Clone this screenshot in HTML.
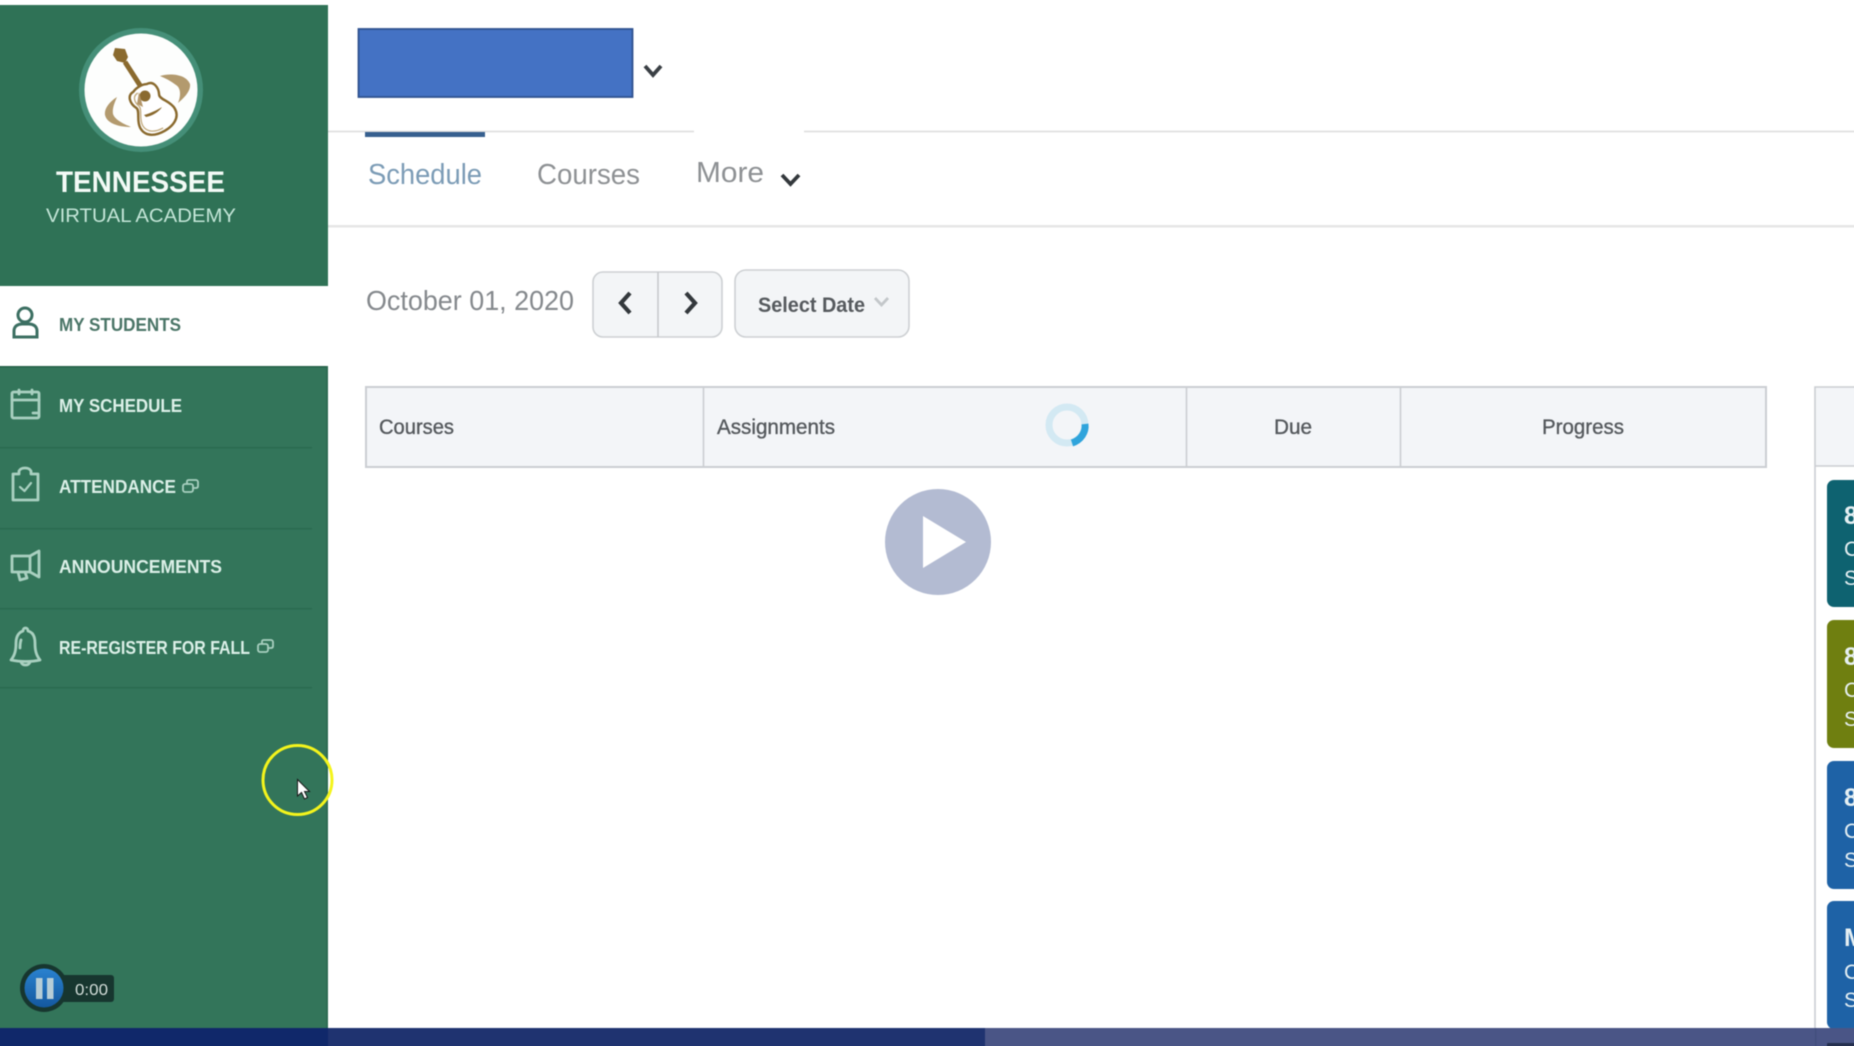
<!DOCTYPE html>
<html lang="en">
<head>
<meta charset="utf-8">
<title>Tennessee Virtual Academy - Schedule</title>
<style>
html,body{margin:0;padding:0;background:#fff;width:1854px;height:1046px;overflow:hidden}
#page{position:relative;width:1854px;height:1046px;overflow:hidden;contain:strict}
svg{display:block;position:absolute;left:-4px;top:-4px;filter:blur(.45px)}
text{font-family:"Liberation Sans",sans-serif}
</style>
</head>
<body>
<div id="page">
<svg width="1862" height="1054" viewBox="-4 -4 1862 1054" xmlns="http://www.w3.org/2000/svg">
<defs>
<linearGradient id="pb" x1="0" y1="0" x2="0" y2="1"><stop offset="0" stop-color="#2a82cf"/><stop offset="1" stop-color="#14589f"/></linearGradient>
</defs>
<rect x="-4" y="-4" width="1862" height="1054" fill="#fff"/>

<!-- sidebar -->
<rect x="-4" y="5" width="332" height="281" fill="#2f7256"/>
<rect x="-4" y="366" width="332" height="662" fill="#33755a"/>
<rect x="-4" y="366" width="332" height="1.500" fill="#256148"/>
<rect x="326" y="366" width="2" height="662" fill="#2c6c52"/>

<!-- logo -->
<circle cx="141" cy="90" r="62" fill="#458f78"/>
<circle cx="141" cy="90" r="56.500" fill="#fdfefd"/>
<path d="M160 76C170 73 186 74 190 84C191 91 184 98 178 103C181 96 181 88 176 85C171 81 165 78 160 76Z" fill="#b39a6e"/>
<path d="M117 97C109 102 104 109 105 115C107 124 120 127 131 127C124 124 115 120 113 114C112 108 115 102 117 97Z" fill="#b39a6e"/>
<path d="M125 62L143 90" stroke="#8a6a2e" stroke-width="5"/>
<path d="M115 48L125 49L128 57L125 63L117 61L113 55Z" fill="#8a6a2e"/>
<g transform="translate(151,107) rotate(-30) scale(1.1)">
<path d="M-7-20C-14-20-15-12-12-6C-10-2-18 4-18 12C-18 22-8 25 0 25C8 25 18 22 18 12C18 4 10-2 12-6C15-12 14-20 7-20C3-22-3-22-7-20Z" fill="#fff" stroke="#8a6a2e" stroke-width="2.200"/>
<path d="M-4-17C-10-17-11-11-9-6C-8-2-15 4-15 11C-15 19-7 22 0 22" fill="none" stroke="#c2ab7e" stroke-width="1.200"/>
</g>
<circle cx="145" cy="96" r="5.500" fill="#8a6a2e"/>
<path d="M144 115C151 113 157 110 162 107C159 112 152 116 146 117Z" fill="#8a6a2e"/>
<path d="M139 92L137 104L143 107Z" fill="#b39568"/>

<text x="56" y="192" font-size="30" font-weight="700" fill="#f3faf6" textLength="169" lengthAdjust="spacingAndGlyphs">TENNESSEE</text>
<text x="46" y="222" font-size="19.500" fill="#c4e6d8" textLength="190" lengthAdjust="spacingAndGlyphs">VIRTUAL ACADEMY</text>

<!-- menu -->
<g font-size="18" font-weight="700">
<text x="59" y="331" fill="#4a7567" textLength="122" lengthAdjust="spacingAndGlyphs">MY STUDENTS</text>
<text x="59" y="412" fill="#dcf0e8" textLength="123" lengthAdjust="spacingAndGlyphs">MY SCHEDULE</text>
<text x="59" y="493" fill="#dcf0e8" textLength="117" lengthAdjust="spacingAndGlyphs">ATTENDANCE</text>
<text x="59" y="573" fill="#dcf0e8" textLength="163" lengthAdjust="spacingAndGlyphs">ANNOUNCEMENTS</text>
<text x="59" y="654" fill="#dcf0e8" textLength="191" lengthAdjust="spacingAndGlyphs">RE-REGISTER FOR FALL</text>
</g>
<g fill="#2a6a50">
<rect x="-4" y="447" width="316" height="1.500"/>
<rect x="-4" y="528" width="316" height="1.500"/>
<rect x="-4" y="608" width="316" height="1.500"/>
<rect x="-4" y="687" width="316" height="1.500"/>
</g>

<!-- menu icons -->
<g fill="none" stroke="#3c6f62" stroke-width="3">
<circle cx="25" cy="315" r="7"/>
<path d="M14 337V331C14 326 18 324 22 324H29C33 324 37 326 37 331V337Z"/>
</g>
<g fill="none" stroke="#a9d0c0" stroke-width="2.800" stroke-linejoin="round" stroke-linecap="round">
<rect x="12" y="392" width="27" height="26" rx="1.500"/>
<path d="M12 400H39M19 390V394M32 390V394M33 413H37"/>
<path d="M13 474H19V471C21 467 29 467 31 471V474H38V500H13Z"/>
<path d="M20 487L24.500 491L31 483" stroke-width="2.200"/>
<path d="M12 556H30V572H12ZM30 556L39 551V577L30 572M18 572L20 580L27 578L25 572"/>
<path d="M11 660C15 655 16 650 16 643C16 635 20 632 23 631C23 627 28 627 28 631C32 632 35 635 35 643C35 650 36 655 40 660C32 662 20 662 11 660ZM21 662C22 666 29 666 30 662M21 640C20 643 20 646 20 648"/>
</g>
<g fill="none" stroke="#a9d0c0" stroke-width="1.800" stroke-linejoin="round">
<rect x="183" y="484" width="10" height="8" rx="2"/><path d="M187 484V481.500C187 480 188 480 189 480H196C197 480 198 481 198 482V486C198 487.500 197 488 196 488H193"/>
<rect x="258" y="644" width="10" height="8" rx="2"/><path d="M262 644V641.500C262 640 263 640 264 640H271C272 640 273 641 273 642V646C273 647.500 272 648 271 648H268"/>
</g>

<!-- top select -->
<rect x="358.500" y="29" width="274" height="68" fill="#4472c4" stroke="#2f528f" stroke-width="1.800"/>
<path d="M645 66L653 75L661 66" fill="none" stroke="#3a3f44" stroke-width="3.800"/>

<!-- tabs -->
<path d="M328 131.500H694M804 131.500H1858" stroke="#dcdcdc" stroke-width="1.600"/>
<rect x="365" y="132" width="120" height="5" fill="#37608f"/>
<text x="368" y="184" font-size="29" fill="#7c9cb6" textLength="114" lengthAdjust="spacingAndGlyphs">Schedule</text>
<text x="537" y="184" font-size="29" fill="#8e9194" textLength="103" lengthAdjust="spacingAndGlyphs">Courses</text>
<text x="696" y="182" font-size="29" fill="#8e9194" textLength="68" lengthAdjust="spacingAndGlyphs">More</text>
<path d="M782 175L790.500 184L799 175" fill="none" stroke="#33383c" stroke-width="3.800"/>
<rect x="328" y="225" width="1530" height="2.500" fill="#e6e6e6"/>

<!-- date bar -->
<text x="366" y="310" font-size="28" fill="#85898d" textLength="208" lengthAdjust="spacingAndGlyphs">October 01, 2020</text>
<rect x="593" y="272" width="129" height="65" rx="10" fill="#f3f5f7" stroke="#cdd0d3" stroke-width="1.600"/>
<path d="M658 272V337" stroke="#c4c7ca" stroke-width="1.500"/>
<path d="M630 293L621 303L630 313" fill="none" stroke="#33383c" stroke-width="4.200"/>
<path d="M686 293L695 303L686 313" fill="none" stroke="#33383c" stroke-width="4.200"/>
<rect x="735" y="270" width="174" height="67" rx="11" fill="#f3f5f7" stroke="#cdd0d3" stroke-width="1.600"/>
<text x="758" y="312" font-size="21" font-weight="700" fill="#565a5e" textLength="107" lengthAdjust="spacingAndGlyphs">Select Date</text>
<path d="M875 298L881.500 305L888 298" fill="none" stroke="#c3c7ca" stroke-width="2.800"/>

<!-- table header -->
<rect x="366" y="387" width="1400" height="80" fill="#f3f5f8" stroke="#cbced2" stroke-width="2"/>
<path d="M703.500 387V467M1186.500 387V467M1400.500 387V467" stroke="#cbced2" stroke-width="1.600"/>
<g font-size="21" fill="#55595d" stroke="#55595d" stroke-width=".35">
<text x="379" y="434" textLength="75" lengthAdjust="spacingAndGlyphs">Courses</text>
<text x="717" y="434" textLength="118" lengthAdjust="spacingAndGlyphs">Assignments</text>
<text x="1274" y="434" textLength="38" lengthAdjust="spacingAndGlyphs">Due</text>
<text x="1542" y="434" textLength="82" lengthAdjust="spacingAndGlyphs">Progress</text>
</g>

<!-- spinner -->
<circle cx="1067" cy="425" r="18" fill="none" stroke="#d3e9f3" stroke-width="7"/>
<path d="M1085 424C1086 432 1081 440 1072 443" fill="none" stroke="#2fa4dc" stroke-width="7"/>

<!-- play overlay -->
<circle cx="938" cy="542" r="53" fill="#b3bbd2"/>
<path d="M923 516L966 542L923 568Z" fill="#fff"/>

<!-- right panel -->
<rect x="1815" y="387" width="43" height="79" fill="#f3f5f8"/>
<path d="M1858 387H1815V1028" fill="none" stroke="#cbced2" stroke-width="1.600"/>
<path d="M1815 466H1858" stroke="#cbced2" stroke-width="1.600"/>
<rect x="1827" y="480" width="40" height="127" rx="7" fill="#0e6270"/>
<rect x="1827" y="620" width="40" height="128" rx="7" fill="#6f7f10"/>
<rect x="1827" y="761" width="40" height="128" rx="7" fill="#1e62a6"/>
<rect x="1827" y="901" width="40" height="128" rx="7" fill="#1e62a6"/>
<g font-size="21" fill="#e6f0f3">
<text x="1844" y="524" font-size="25" font-weight="700">8</text><text x="1844" y="556">C</text><text x="1844" y="585">S</text>
<text x="1844" y="665" font-size="25" font-weight="700">8</text><text x="1844" y="697">C</text><text x="1844" y="726">S</text>
<text x="1844" y="806" font-size="25" font-weight="700">8</text><text x="1844" y="838">C</text><text x="1844" y="867">S</text>
<text x="1844" y="946" font-size="25" font-weight="700">M</text><text x="1844" y="979">C</text><text x="1844" y="1007">S</text>
</g>

<!-- bottom bar -->
<rect x="985" y="1028" width="873" height="22" fill="#4a5586"/>
<rect x="328" y="1028" width="657" height="22" fill="#1f3370"/>
<rect x="-4" y="1028" width="332" height="22" fill="#10286a"/>
<rect x="1815" y="1028" width="1.500" height="22" fill="#434e7d"/>
<rect x="1827" y="1043" width="31" height="7" rx="1" fill="#25304f"/>

<!-- cursor highlight -->
<circle cx="297.500" cy="780" r="34.500" fill="none" stroke="#f4f41c" stroke-width="3"/>
<path d="M297.500 779.500V796L301.500 792.500L304.500 799L307.500 797.500L304.500 791.500H309.500Z" fill="#fff" stroke="#1a1a1a" stroke-width="1"/>

<!-- player control -->
<rect x="58" y="975" width="56" height="27" rx="3" fill="#17362f"/>
<circle cx="44" cy="988" r="24" fill="#17362f"/>
<circle cx="44" cy="988" r="19.500" fill="url(#pb)"/>
<rect x="36" y="978" width="6.500" height="21" fill="#b7cdd6"/>
<rect x="47" y="978" width="6.500" height="21" fill="#b7cdd6"/>
<text x="75" y="995" font-size="16" fill="#d5dfdb" textLength="33" lengthAdjust="spacingAndGlyphs">0:00</text>
</svg>
</div>
</body>
</html>
